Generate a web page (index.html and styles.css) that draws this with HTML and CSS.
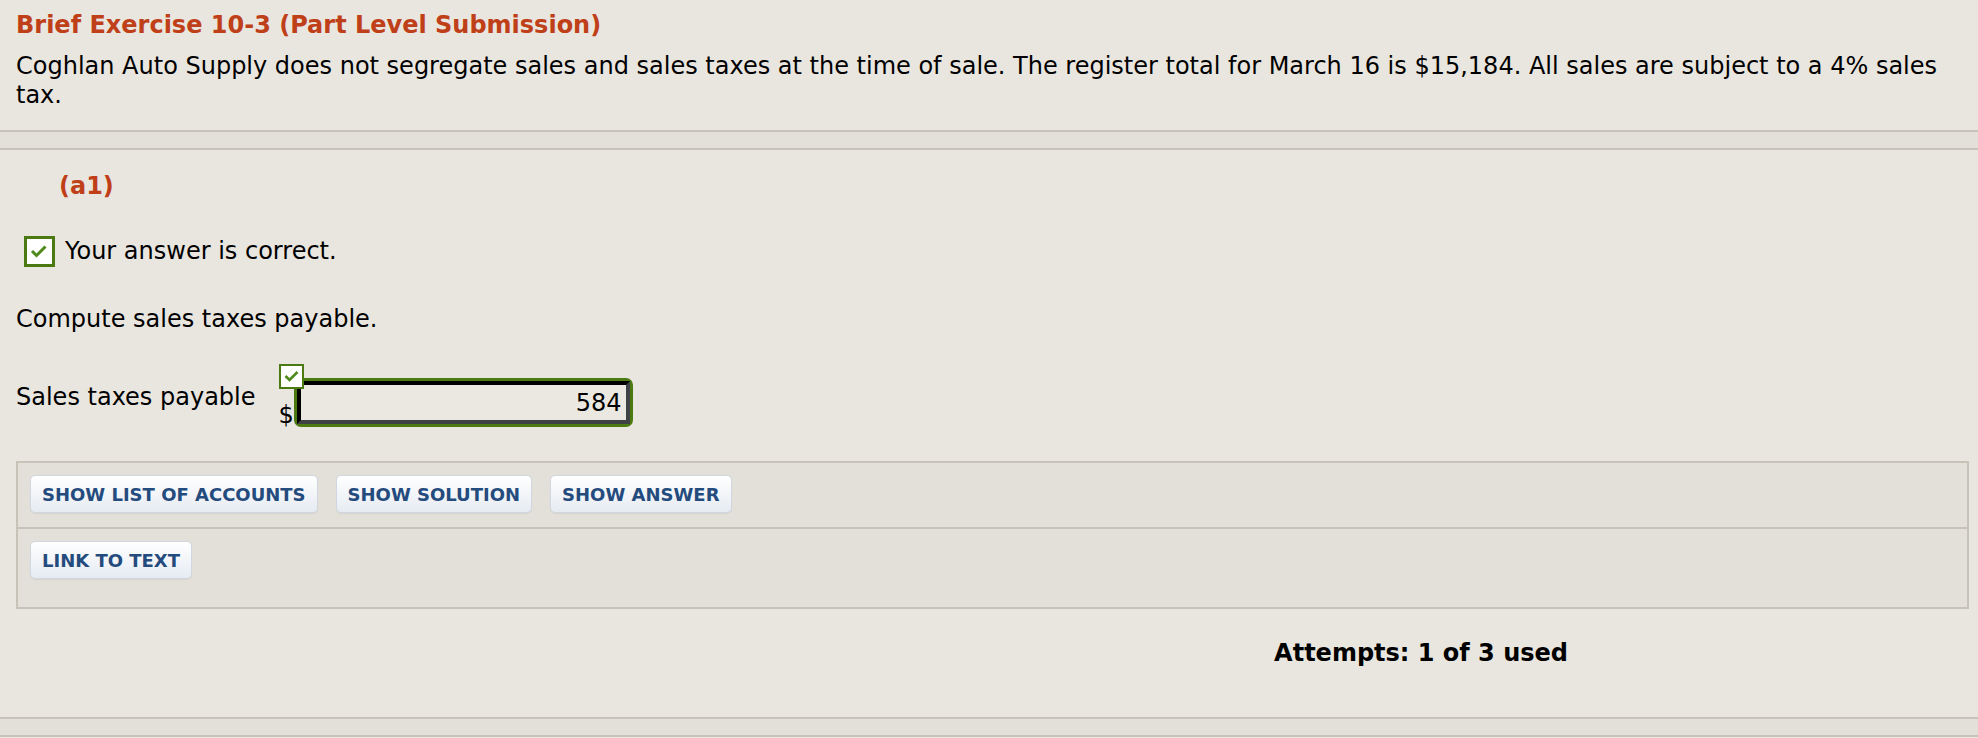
FILE: index.html
```html
<!DOCTYPE html>
<html lang="en">
<head>
<meta charset="utf-8">
<title>Brief Exercise 10-3</title>
<link rel="stylesheet" href="styles.css">
</head>
<body>
<div class="intro">
  <h1 class="title">Brief Exercise 10-3 (Part Level Submission)</h1>
  <p class="question">Coghlan Auto Supply does not segregate sales and sales taxes at the time of sale. The register total for March 16 is $15,184. All sales are subject to a 4% sales tax.</p>
</div>
<div class="divider"></div>
<section class="part">
  <h2 class="part-label">(a1)</h2>
  <div class="status">
    <span class="check check-lg"><svg viewBox="0 0 25 25" width="25" height="25"><polyline points="5,12 9.5,16.5 18.5,7.5" fill="none" stroke="#4e8a1a" stroke-width="3"/></svg></span>
    <span class="status-text">Your answer is correct.</span>
  </div>
  <p class="instruction">Compute sales taxes payable.</p>
  <div class="answer-row">
    <label class="answer-label">Sales taxes payable</label>
    <div class="field-cell">
      <span class="check check-sm"><svg viewBox="0 0 21 21" width="21" height="21"><polyline points="4.5,10 8.5,14 16.5,6" fill="none" stroke="#4e8a1a" stroke-width="2.6"/></svg></span>
      <span class="dollar">$</span>
      <div class="input-frame"><div class="input">584</div></div>
    </div>
  </div>
  <div class="tools">
    <div class="tool-row">
      <button class="btn">SHOW LIST OF ACCOUNTS</button>
      <button class="btn">SHOW SOLUTION</button>
      <button class="btn">SHOW ANSWER</button>
    </div>
    <div class="tool-row tool-row-last">
      <button class="btn">LINK TO TEXT</button>
    </div>
  </div>
  <div class="attempts">Attempts: 1 of 3 used</div>
</section>
<div class="divider"></div>
</body>
</html>
```

FILE: styles.css
```css
* { box-sizing: border-box; }
html, body {
  margin: 0;
  padding: 0;
  background: #e9e6df;
}
body {
  font-family: "DejaVu Sans", Verdana, sans-serif;
  font-size: 24px;
  line-height: 29px;
  color: #000;
}
.intro {
  padding: 11px 16px 0 16px;
}
.title {
  margin: 0;
  font-size: 24px;
  line-height: 29px;
  font-weight: bold;
  color: #bf3f18;
}
.question {
  margin: 12px 0 0 0;
}
.divider {
  margin-top: 20px;
  height: 20px;
  background: #e3e0d9;
  border-top: 2px solid #c7c3b8;
  border-bottom: 2px solid #c7c3b8;
}
.part {
  padding: 0 9px 0 16px;
}
.part-label {
  margin: 22px 0 0 43px;
  font-size: 24px;
  line-height: 29px;
  font-weight: bold;
  color: #bf3f18;
}
.status {
  margin-top: 35px;
  padding-left: 8px;
  display: flex;
  align-items: center;
  gap: 10px;
}
.check {
  display: flex;
  align-items: center;
  justify-content: center;
  background: #fff;
  border: 3px solid #4b7a12;
}
.check-lg {
  width: 31px;
  height: 31px;
}
.check-sm {
  position: absolute;
  left: 0;
  top: 0;
  width: 25px;
  height: 25px;
  border-width: 2px;
  z-index: 2;
}
.instruction {
  margin: 38px 0 0 0;
}
.answer-row {
  margin-top: 30px;
  display: flex;
  align-items: center;
  gap: 23px;
}
.answer-label {
  padding-top: 4px;
}
.field-cell {
  position: relative;
  display: flex;
  align-items: flex-end;
  padding-top: 14px;
}
.dollar {
  line-height: 24px;
  width: 15px;
}
.input-frame {
  width: 339px;
  height: 49px;
  border: 3px solid #4b7a12;
  border-radius: 7px;
  background: #4b7a12;
}
.input {
  height: 100%;
  border-style: solid;
  border-width: 4px;
  border-color: #000 #3f4245 #3f4245 #000;
  background: #ebe8e2;
  text-align: right;
  padding: 1px 4px 0 0;
  line-height: 34px;
  font-size: 24px;
}
.tools {
  margin-top: 34px;
  border: 2px solid #c7c3b8;
  background: #e3e0d9;
}
.tool-row {
  display: flex;
  gap: 18px;
  padding: 12px 12px 14px 12px;
}
.tool-row-last {
  border-top: 2px solid #c7c3b8;
  padding-bottom: 28px;
}
.btn {
  height: 38px;
  padding: 0 11px;
  font-family: "DejaVu Sans", Verdana, sans-serif;
  font-weight: bold;
  font-size: 18px;
  color: #244b7d;
  background: linear-gradient(#ffffff, #e6ebf2);
  border: 1px solid #d0d7e0;
  border-radius: 5px;
  box-shadow: 0 1px 1px rgba(0,0,0,0.06);
}
.attempts {
  margin-top: 30px;
  display: flex;
  justify-content: flex-end;
  padding-right: 401px;
  font-weight: bold;
}
.part + .divider {
  margin-top: 49px;
}
```
